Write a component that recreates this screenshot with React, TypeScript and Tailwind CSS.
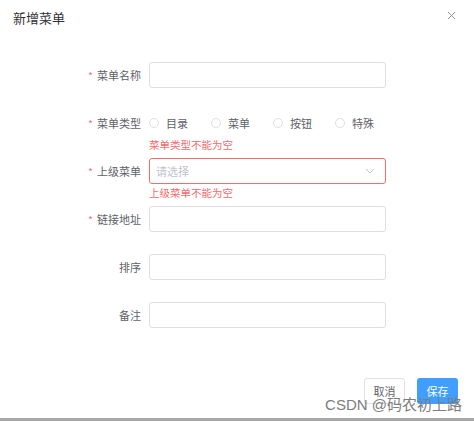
import React from "react"

const FONT = { fontFamily: '"Noto Sans CJK SC", "Noto Sans", sans-serif' }

type Item = {
  label: string
  required?: boolean
  kind: "input" | "radio" | "select"
  error?: string
}

const ITEMS: Item[] = [
  { label: "菜单名称", required: true, kind: "input" },
  { label: "菜单类型", required: true, kind: "radio", error: "菜单类型不能为空" },
  { label: "上级菜单", required: true, kind: "select", error: "上级菜单不能为空" },
  { label: "链接地址", required: true, kind: "input" },
  { label: "排序", kind: "input" },
  { label: "备注", kind: "input" },
]

const RADIOS = ["目录", "菜单", "按钮", "特殊"]

function Control({ item }: { item: Item }) {
  if (item.kind === "radio") {
    return (
      <div className="flex items-center h-[26px]">
        {RADIOS.map((r) => (
          <label key={r} className="flex items-center mr-[23px] text-[11px] text-[#606266]">
            <span className="w-[10px] h-[10px] rounded-full border border-[#dcdfe6] bg-white mr-[7px]" />
            {r}
          </label>
        ))}
      </div>
    )
  }
  if (item.kind === "select") {
    return (
      <div className="w-[237px] h-[26px] border border-[#f56c6c] rounded-[3px] flex items-center justify-between pl-[6px] pr-[10px]">
        <span className="text-[11px] text-[#c0c4cc]">请选择</span>
        <svg width="10" height="6" viewBox="0 0 10 6" fill="none">
          <path d="M1 1l4 4 4-4" stroke="#c0c4cc" strokeWidth="1" />
        </svg>
      </div>
    )
  }
  return <div className="w-[237px] h-[26px] border border-[#dcdfe6] rounded-[3px] bg-white" />
}

export default function App() {
  return (
    <div className="relative w-[474px] h-[421px] bg-white flex flex-col overflow-hidden" style={FONT}>
      {/* Header */}
      <div className="h-[36px] flex items-center justify-between pl-[13px] pr-[18px]">
        <span className="text-[13px] text-[#303133]">新增菜单</span>
        <svg width="9" height="9" viewBox="0 0 9 9" className="-mt-[6px]">
          <path d="M1 1l7 7M8 1L1 8" stroke="#909399" strokeWidth="1" />
        </svg>
      </div>

      {/* Form */}
      <div className="flex flex-col pt-[26px]">
        {ITEMS.map((item) => (
          <div key={item.label} className="flex">
            <div className="w-[141px] h-[26px] flex items-center justify-end pr-[0px] text-[11px] text-[#606266]">
              {item.required && <span className="text-[#f56c6c] mr-[4px] text-[10px]">*</span>}
              {item.label}
            </div>
            <div className="ml-[8px] flex flex-col">
              <Control item={item} />
              <div className="h-[22px] pt-[2px] text-[10.5px] leading-[14px] text-[#f56c6c]">{item.error}</div>
            </div>
          </div>
        ))}
      </div>

      {/* Footer */}
      <div className="flex justify-end gap-[12px] pr-[16px] mt-[28px]">
        <button className="w-[41px] h-[26px] border border-[#dcdfe6] rounded-[3px] bg-white text-[11px] text-[#606266]">
          取消
        </button>
        <button className="w-[41px] h-[26px] rounded-[3px] bg-[#409eff] text-[11px] text-white">保存</button>
      </div>

      <div className="mt-auto h-[3px] bg-[#a8a8a8]" />

      {/* Watermark */}
      <div
        className="absolute right-[12px] top-[395px] text-[15px] text-[#7d7d7d] leading-[20px] whitespace-nowrap"
        style={{ fontFamily: '"Liberation Sans", "Noto Sans CJK SC", sans-serif' }}
      >
        CSDN @码农初上路
      </div>
    </div>
  )
}
